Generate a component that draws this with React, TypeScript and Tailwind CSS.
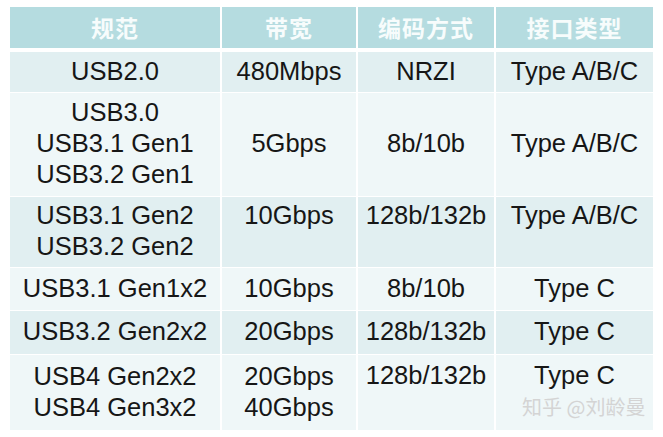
import React from 'react';

type Cell = { lines: string[]; top?: string };
type Row = { h: string; bg: string; cells: Cell[] };

const ODD = 'bg-[#e1eff1]';
const EVEN = 'bg-[#eff7f8]';

const rows: Row[] = [
    { h: 'h-[40px]', bg: ODD, cells: [{ lines: ['USB2.0'] }, { lines: ['480Mbps'] }, { lines: ['NRZI'] }, { lines: ['Type A/B/C'] }] },
    {
        h: 'h-[103px]',
        bg: EVEN,
        cells: [
            { lines: ['USB3.0', 'USB3.1 Gen1', 'USB3.2 Gen1'] },
            { lines: ['5Gbps'] },
            { lines: ['8b/10b'] },
            { lines: ['Type A/B/C'] },
        ],
    },
    {
        h: 'h-[70px]',
        bg: ODD,
        cells: [
            { lines: ['USB3.1 Gen2', 'USB3.2 Gen2'] },
            { lines: ['10Gbps'], top: 'pt-[3px]' },
            { lines: ['128b/132b'], top: 'pt-[3px]' },
            { lines: ['Type A/B/C'], top: 'pt-[3px]' },
        ],
    },
    { h: 'h-[42px]', bg: EVEN, cells: [{ lines: ['USB3.1 Gen1x2'] }, { lines: ['10Gbps'] }, { lines: ['8b/10b'] }, { lines: ['Type C'] }] },
    { h: 'h-[43px]', bg: ODD, cells: [{ lines: ['USB3.2 Gen2x2'] }, { lines: ['20Gbps'] }, { lines: ['128b/132b'] }, { lines: ['Type C'] }] },
    {
        h: 'h-[75px]',
        bg: EVEN,
        cells: [
            { lines: ['USB4 Gen2x2', 'USB4 Gen3x2'] },
            { lines: ['20Gbps', '40Gbps'] },
            { lines: ['128b/132b'], top: 'pt-[5px]' },
            { lines: ['Type C'], top: 'pt-[5px]' },
        ],
    },
];

const headers = ['规范', '带宽', '编码方式', '接口类型'];

export default function App() {
    return (
        <div className="relative w-[663px] h-[437px] bg-white overflow-hidden">
            <div className="pt-[7px] pl-[10px]">
                <div className="grid grid-cols-[210px_134px_136px_157px] gap-x-[2px] w-[643px]">
                    {headers.map((t) => (
                        <div
                            key={t}
                            className="h-[41px] bg-[#b5dce0] flex items-center justify-center text-[23px] font-bold text-[#f7fcfc] tracking-[1px]"
                            style={{ fontFamily: '"Noto Sans CJK SC", sans-serif' }}
                        >
                            {t}
                        </div>
                    ))}
                </div>
                <div className="mt-[4px] flex flex-col gap-y-[1px] w-[643px]">
                    {rows.map((r, i) => (
                        <div key={i} className={`grid grid-cols-[210px_134px_136px_157px] gap-x-[2px] ${r.h}`}>
                            {r.cells.map((c, j) => (
                                <div
                                    key={j}
                                    className={`${r.bg} flex flex-col items-center ${c.top ? `justify-start ${c.top}` : 'justify-center pb-[2px]'} text-[25.5px] leading-[31px] text-[#161616]`}
                                    style={{ fontFamily: '"Liberation Sans", Arial, sans-serif' }}
                                >
                                    {c.lines.map((l) => (
                                        <span key={l} className="whitespace-nowrap">{l}</span>
                                    ))}
                                </div>
                            ))}
                        </div>
                    ))}
                </div>
            </div>
            <div
                className="absolute left-[522px] top-[394px] text-[20px] leading-[26px] text-[#d4d4d4] whitespace-nowrap"
                style={{ fontFamily: '"Noto Sans CJK SC", sans-serif' }}
            >
                知乎 @刘龄曼
            </div>
        </div>
    );
}
